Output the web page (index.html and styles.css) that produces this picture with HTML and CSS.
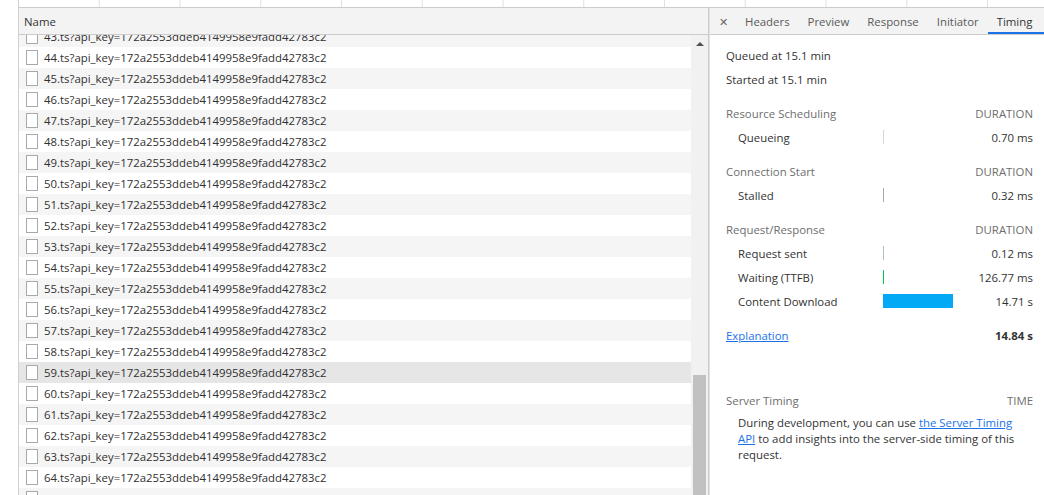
FILE: index.html
```html
<!DOCTYPE html>
<html>
<head>
<meta charset="utf-8">
<link rel="stylesheet" href="styles.css">
</head>
<body>
<div class="page">
  <div class="gutter"></div>
  <div class="main">
    <div class="overview"></div>
    <div class="panes">
      <section class="requests">
        <div class="req-header">Name</div>
        <div class="req-body">
          <div class="req-viewport">
            <div class="req-list" style="margin-top:-9px">
              <div class="row odd"><span class="file"></span><span class="name">43.ts?api_key=172a2553ddeb4149958e9fadd42783c2</span></div>
              <div class="row"><span class="file"></span><span class="name">44.ts?api_key=172a2553ddeb4149958e9fadd42783c2</span></div>
              <div class="row odd"><span class="file"></span><span class="name">45.ts?api_key=172a2553ddeb4149958e9fadd42783c2</span></div>
              <div class="row"><span class="file"></span><span class="name">46.ts?api_key=172a2553ddeb4149958e9fadd42783c2</span></div>
              <div class="row odd"><span class="file"></span><span class="name">47.ts?api_key=172a2553ddeb4149958e9fadd42783c2</span></div>
              <div class="row"><span class="file"></span><span class="name">48.ts?api_key=172a2553ddeb4149958e9fadd42783c2</span></div>
              <div class="row odd"><span class="file"></span><span class="name">49.ts?api_key=172a2553ddeb4149958e9fadd42783c2</span></div>
              <div class="row"><span class="file"></span><span class="name">50.ts?api_key=172a2553ddeb4149958e9fadd42783c2</span></div>
              <div class="row odd"><span class="file"></span><span class="name">51.ts?api_key=172a2553ddeb4149958e9fadd42783c2</span></div>
              <div class="row"><span class="file"></span><span class="name">52.ts?api_key=172a2553ddeb4149958e9fadd42783c2</span></div>
              <div class="row odd"><span class="file"></span><span class="name">53.ts?api_key=172a2553ddeb4149958e9fadd42783c2</span></div>
              <div class="row"><span class="file"></span><span class="name">54.ts?api_key=172a2553ddeb4149958e9fadd42783c2</span></div>
              <div class="row odd"><span class="file"></span><span class="name">55.ts?api_key=172a2553ddeb4149958e9fadd42783c2</span></div>
              <div class="row"><span class="file"></span><span class="name">56.ts?api_key=172a2553ddeb4149958e9fadd42783c2</span></div>
              <div class="row odd"><span class="file"></span><span class="name">57.ts?api_key=172a2553ddeb4149958e9fadd42783c2</span></div>
              <div class="row"><span class="file"></span><span class="name">58.ts?api_key=172a2553ddeb4149958e9fadd42783c2</span></div>
              <div class="row selected"><span class="file"></span><span class="name">59.ts?api_key=172a2553ddeb4149958e9fadd42783c2</span></div>
              <div class="row"><span class="file"></span><span class="name">60.ts?api_key=172a2553ddeb4149958e9fadd42783c2</span></div>
              <div class="row odd"><span class="file"></span><span class="name">61.ts?api_key=172a2553ddeb4149958e9fadd42783c2</span></div>
              <div class="row"><span class="file"></span><span class="name">62.ts?api_key=172a2553ddeb4149958e9fadd42783c2</span></div>
              <div class="row odd"><span class="file"></span><span class="name">63.ts?api_key=172a2553ddeb4149958e9fadd42783c2</span></div>
              <div class="row"><span class="file"></span><span class="name">64.ts?api_key=172a2553ddeb4149958e9fadd42783c2</span></div>
              <div class="row odd"><span class="file"></span><span class="name">65.ts?api_key=172a2553ddeb4149958e9fadd42783c2</span></div>
            </div>
          </div>
          <div class="scrollbar">
            <div class="scroll-btn"><span class="arrow-up"></span></div>
            <div class="thumb" style="margin-top:323px"></div>
          </div>
        </div>
      </section>
      <section class="details">
        <div class="tabs">
          <span class="close">&#x2715;</span>
          <span class="tab">Headers</span>
          <span class="tab">Preview</span>
          <span class="tab">Response</span>
          <span class="tab">Initiator</span>
          <span class="tab active">Timing</span>
        </div>
        <div class="timing">
          <div class="line">Queued at 15.1 min</div>
          <div class="line">Started at 15.1 min</div>

          <div class="group"><span>Resource Scheduling</span><span class="col-head">DURATION</span></div>
          <div class="trow"><span class="label">Queueing</span><span class="bar-cell"><span class="bar bar-queue" style="width:1px"></span></span><span class="val">0.70 ms</span></div>

          <div class="group"><span>Connection Start</span><span class="col-head">DURATION</span></div>
          <div class="trow"><span class="label">Stalled</span><span class="bar-cell"><span class="bar bar-stall" style="width:1px"></span></span><span class="val">0.32 ms</span></div>

          <div class="group"><span>Request/Response</span><span class="col-head">DURATION</span></div>
          <div class="trow"><span class="label">Request sent</span><span class="bar-cell"><span class="bar bar-send" style="width:1px"></span></span><span class="val">0.12 ms</span></div>
          <div class="trow"><span class="label">Waiting (TTFB)</span><span class="bar-cell"><span class="bar bar-wait" style="width:1px"></span></span><span class="val">126.77 ms</span></div>
          <div class="trow"><span class="label">Content Download</span><span class="bar-cell"><span class="bar bar-download" style="width:70px"></span></span><span class="val">14.71 s</span></div>

          <div class="total"><a href="#" class="link">Explanation</a><span class="total-val">14.84 s</span></div>

          <div class="group server"><span>Server Timing</span><span class="col-head">TIME</span></div>
          <p class="server-note">During development, you can use <a href="#" class="link">the Server Timing<br>API</a> to add insights into the server-side timing of this<br>request.</p>
        </div>
      </section>
    </div>
  </div>
</div>
</body>
</html>
```

FILE: styles.css
```css
* { box-sizing: border-box; }
html, body { margin: 0; padding: 0; background: #fff; }
body {
  font-family: "Open Sans", "Noto Sans", sans-serif;
  font-size: 11.4px;
  color: #333;
  width: 1044px;
  height: 495px;
  overflow: hidden;
}
.page { display: flex; height: 495px; }
.gutter { flex: 0 0 19px; border-right: 1px solid #d0d0d0; background: #fff; }
.main { flex: 1; display: flex; flex-direction: column; min-width: 0; }
.overview {
  height: 8px;
  border-bottom: 1px solid #cccccc;
  background-image: linear-gradient(to right, transparent 79px, #e0e0e0 79px, #e0e0e0 80px, transparent 80px);
  background-size: 80.75px 100%;
  background-position: 1px 0;
}
.panes { flex: 1; display: flex; min-height: 0; }

.requests { flex: 0 0 690px; display: flex; flex-direction: column; border-right: 1px solid #cccccc; }
.req-header {
  height: 27px;
  flex: 0 0 27px;
  background: #f3f3f3;
  border-bottom: 1px solid #cccccc;
  display: flex;
  align-items: center;
  padding-left: 5px;
  color: #333;
}
.req-body { flex: 1; display: flex; min-height: 0; }
.req-viewport { flex: 1; overflow: hidden; }
.req-list { display: flex; flex-direction: column; }
.row { height: 21px; display: flex; align-items: center; padding-left: 7px; background: #fff; white-space: nowrap; }
.row.odd { background: #f5f5f5; }
.row.selected { background: #e6e6e6; }
.file { width: 12px; height: 15px; border: 1px solid #a9a9a9; background: #fff; margin-right: 6px; flex: 0 0 12px; }
.name { color: #303030; }

.scrollbar { flex: 0 0 17px; background: #f1f1f1; display: flex; flex-direction: column; align-items: center; }
.scroll-btn { height: 17px; width: 17px; display: flex; align-items: center; justify-content: center; }
.arrow-up { width: 0; height: 0; border-left: 4px solid transparent; border-right: 4px solid transparent; border-bottom: 4px solid #505050; }
.thumb { width: 13px; flex: 1; background: #c1c1c1; }

.details { flex: 1; display: flex; flex-direction: column; min-width: 0; border-left: 1px solid #e0e0e0; }
.tabs {
  height: 27px;
  flex: 0 0 27px;
  background: #f3f3f3;
  border-bottom: 1px solid #cccccc;
  display: flex;
  align-items: stretch;
  color: #5a5a5a;
}
.close { width: 26px; display: flex; align-items: center; justify-content: center; font-size: 11px; color: #666; }
.tab { padding: 2px 9px 0; display: flex; align-items: center; border-bottom: 2px solid transparent; }
.tab.active { border-bottom-color: #1a73e8; color: #333; flex: 1; }

.timing { padding: 8px 11px 0 16px; }
.line { height: 24px; display: flex; align-items: center; }
.group { height: 24px; display: flex; align-items: center; justify-content: space-between; color: #6e6e6e; margin-top: 10px; }
.col-head { color: #6e6e6e; }
.trow { height: 24px; display: flex; align-items: center; padding-left: 12px; }
.label { flex: 0 0 145px; }
.bar-cell { flex: 0 0 80px; display: flex; align-items: center; height: 14px; }
.bar { display: block; height: 14px; }
.bar-queue { background: #d6d6d6; }
.bar-stall { background: #a8a8a8; }
.bar-send { background: #b0bec5; }
.bar-wait { background: #00c853; }
.bar-download { background: #03a9f4; }
.val { flex: 1; text-align: right; }
.total { height: 24px; display: flex; align-items: center; justify-content: space-between; margin-top: 10px; }
.link { color: #1a73e8; text-decoration: underline; }
.total-val { font-weight: 700; color: #333; }
.group.server { margin-top: 41px; }
.server-note { margin: 3px 0 0 12px; line-height: 16px; color: #333; }
```
